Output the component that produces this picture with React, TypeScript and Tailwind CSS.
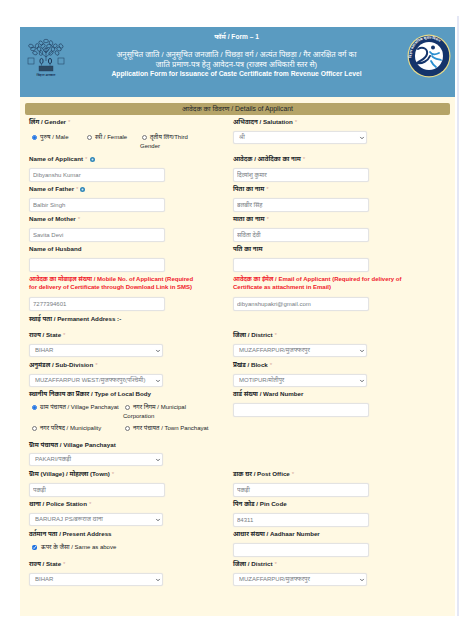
import React from 'react';
import { ChevronDown } from 'lucide-react';

const Star = () => <span className="text-[#d9a9a0] ml-[2px] font-normal">*</span>;

const Info = () => (
  <svg width="5" height="5" viewBox="0 0 12 12" className="inline-block ml-[2px] align-[-1px]">
    <circle cx="6" cy="6" r="6" fill="#2f86b8" />
    <circle cx="6" cy="6" r="2.4" fill="#cfe6f2" />
  </svg>
);

const Label: React.FC<{ text: string; req?: boolean; info?: boolean }> = ({ text, req, info }) => (
  <div className="h-[11px] mb-[4px] leading-[11px] text-[6.2px] font-bold text-[#212529] whitespace-nowrap">
    {text}
    {req && <Star />}
    {info && <Info />}
  </div>
);

const TextBox: React.FC<{ value?: string }> = ({ value = '' }) => (
  <input
    readOnly
    value={value}
    className="block w-[136px] h-[14px] bg-white border border-[#e3e3e3] rounded-[2px] px-[3px] text-[6px] text-[#777d83] shadow-[0_0_1px_#ddd] outline-none"
  />
);

const SelectBox: React.FC<{ value: string }> = ({ value }) => (
  <div className="relative w-[134px] h-[13px]">
    <select
      defaultValue={value}
      className="appearance-none block w-full h-full bg-white border border-[#e3e3e3] rounded-[2px] pl-[5px] text-[6px] text-[#777d83] shadow-[0_0_1px_#ddd] outline-none"
    >
      <option>{value}</option>
    </select>
    <ChevronDown size={6} strokeWidth={3} className="absolute right-[2px] top-[4px] text-[#343a40]" />
  </div>
);

const Radio: React.FC<{ checked?: boolean; name: string }> = ({ checked, name }) => (
  <input
    type="radio"
    name={name}
    defaultChecked={checked}
    className="w-[5px] h-[5px] m-0 ml-[2px] mr-[3px] inline-block accent-[#1a6fe0] align-[-0.5px]"
  />
);

const Field: React.FC<{ label: string; req?: boolean; info?: boolean; value?: string; select?: boolean }> = ({
  label,
  req,
  info,
  value,
  select,
}) => (
  <div className="h-[30px]">
    <Label text={label} req={req} info={info} />
    {select ? <SelectBox value={value || ''} /> : <TextBox value={value} />}
  </div>
);

const Row: React.FC<{ children: React.ReactNode; className?: string }> = ({ children, className = '' }) => (
  <div className={`grid grid-cols-[204px_1fr] ${className}`}>{children}</div>
);

const Emblem = () => (
  <svg width="42" height="42" viewBox="0 0 42 42" fill="none" stroke="#1e3a5a" strokeWidth="0.6">
    <path d="M21 26V12M21 22l-6-5M21 22l6-5M21 18l-4-5M21 18l4-5" />
    {[
      [21, 6], [16, 8], [26, 8], [12, 11], [30, 11], [8, 14], [34, 14], [14, 14], [28, 14],
      [18, 11], [24, 11], [10, 18], [32, 18], [16, 18], [26, 18], [21, 15], [6, 11], [36, 11],
    ].map(([x, y], i) => (
      <ellipse key={i} cx={x} cy={y} rx="2.4" ry="1.7" transform={`rotate(${i * 35} ${x} ${y})`} />
    ))}
    <ellipse cx="16.5" cy="26" rx="1.6" ry="2.6" strokeWidth="1" />
    <ellipse cx="25" cy="26" rx="1.6" ry="2.6" strokeWidth="1" />
    <path d="M16.5 29v1.5M25 29v1.5" />
    <rect x="3" y="23" width="6" height="6" strokeWidth="0.5" />
    <rect x="33" y="23" width="6" height="6" strokeWidth="0.5" />
    <rect x="14" y="31" width="14" height="5" fill="#2d4a63" strokeWidth="0.4" />
    <text x="21" y="41" fontSize="3.6" fill="#1e3a5a" stroke="none" textAnchor="middle" fontWeight="700">
      बिहार सरकार
    </text>
  </svg>
);

const MissionLogo = () => (
  <svg width="44" height="44" viewBox="0 0 44 44">
    <circle cx="22" cy="22" r="21.5" fill="#e4d98a" />
    <circle cx="22" cy="22" r="20.3" fill="#14346b" />
    <circle cx="22" cy="22" r="14" fill="#fff" />
    <defs>
      <path id="ring" d="M4.8 26A17.6 17.6 0 1 1 39.2 26" />
    </defs>
    <text fontSize="3.4" fill="#fff" fontWeight="700">
      <textPath href="#ring" startOffset="4%">बिहार प्रशासनिक सुधार मिशन</textPath>
    </text>
    <path d="M11 15c5-3 10 0 9 5s-6 6-10 9c5 1 11-2 13-7" fill="none" stroke="#14346b" strokeWidth="2" strokeLinecap="round" />
    <circle cx="26" cy="13.5" r="2" fill="#14346b" />
    <path d="M23 18c2 3 5 3 9 1M25 22c2 3 5 3 9 4M24 27c1 2 2 4 5 6" fill="none" stroke="#2a8fd0" strokeWidth="1.8" strokeLinecap="round" />
  </svg>
);

export default function App() {
  return (
    <div className="w-[474px] h-[632px] bg-white pt-[16px] pl-[20px] font-['Liberation_Sans','Noto_Sans',sans-serif]">
      <div className="w-[439px] h-[600px] pt-[11px] border-r-2 border-[#e4e7f5]">
        <div className="w-[435px] h-[70px] bg-[#5a9bc1] flex text-white">
          <div className="w-[48px] pl-[5px] pt-[8px]">
            <Emblem />
          </div>
          <div className="flex-1 text-center">
            <div className="mt-[5px] text-[6.6px] leading-[9px] font-bold">फॉर्म / Form – 1</div>
            <div className="mt-[9px] text-[7.7px] leading-[9.5px]">
              अनुसूचित जाति / अनुसूचित जनजाति / पिछड़ा वर्ग / अत्यंत पिछड़ा / गैर आरक्षित वर्ग का
            </div>
            <div className="text-[7.7px] leading-[9.5px]">जाति प्रमाण-पत्र हेतु आवेदन-पत्र (राजस्व अधिकारी स्तर से)</div>
            <div className="text-[6.75px] leading-[9px] font-bold">
              Application Form for Issuance of Caste Certificate from Revenue Officer Level
            </div>
          </div>
          <div className="w-[50px] pt-[7px] pl-[2px]">
            <MissionLogo />
          </div>
        </div>

        <div className="w-[435px] h-[519px] bg-[#fff9e3] pt-[6px]">
          <div className="mx-[5px] h-[12px] rounded-[2px] bg-[#b5a468] text-center text-[6.8px] leading-[12px] text-[#212529]">
            आवेदक का विवरण / Details of Applicant
          </div>

          <div className="pl-[9px]">
            <Row className="h-[38px] pt-[1px]">
              <div>
                <Label text="लिंग / Gender" req />
                <div className="flex text-[6px] leading-[9px] text-[#212529] pl-[1px] pt-[2px]">
                  <label className="w-[55px] whitespace-nowrap"><Radio name="g" checked />पुरुष / Male</label>
                  <label className="w-[55px] whitespace-nowrap"><Radio name="g" />स्त्री / Female</label>
                  <label className="w-[60px]"><Radio name="g" />तृतीय लिंग/Third Gender</label>
                </div>
              </div>
              <div>
                <Label text="अभिवादन / Salutation" req />
                <SelectBox value="श्री" />
              </div>
            </Row>

            <Row>
              <Field label="Name of Applicant" req info value="Dibyanshu Kumar" />
              <Field label="आवेदक / आवेदिका का नाम" req value="दिव्यांशु कुमार" />
            </Row>
            <Row>
              <Field label="Name of Father" req info value="Balbir Singh" />
              <Field label="पिता का नाम" req value="बलबीर सिंह" />
            </Row>
            <Row>
              <Field label="Name of Mother" req value="Savita Devi" />
              <Field label="माता का नाम" req value="सविता देवी" />
            </Row>
            <Row>
              <Field label="Name of Husband" />
              <Field label="पति का नाम" />
            </Row>

            <Row className="h-[39px]">
              <div>
                <div className="w-[170px] h-[20px] mb-[4px] text-[6px] leading-[8.3px] pt-[2px] font-bold text-[#f0202a]">
                  आवेदक का मोबाइल संख्या / Mobile No. of Applicant (Required for delivery of Certificate through Download Link in SMS)
                </div>
                <TextBox value="7277394601" />
              </div>
              <div>
                <div className="w-[175px] h-[20px] mb-[4px] text-[6px] leading-[8.3px] pt-[2px] font-bold text-[#f0202a]">
                  आवेदक का ईमेल / Email of Applicant (Required for delivery of Certificate as attachment in Email)
                </div>
                <TextBox value="dibyanshupakri@gmail.com" />
              </div>
            </Row>

            <div className="h-[17px] pt-[1px] text-[6.2px] leading-[11px] font-bold text-[#212529]">स्थाई पता / Permanent Address :-</div>

            <Row>
              <Field label="राज्य / State" req select value="BIHAR" />
              <Field label="जिला / District" req select value="MUZAFFARPUR/मुजफ्फरपुर" />
            </Row>
            <Row className="h-[29px]">
              <Field label="अनुमंडल / Sub-Division" req select value="MUZAFFARPUR WEST/मुजफ्फरपुर(पश्चिमी)" />
              <Field label="प्रखंड / Block" req select value="MOTIPUR/मोतीपुर" />
            </Row>

            <Row className="h-[51px]">
              <div>
                <Label text="स्थानीय निकाय का प्रकार / Type of Local Body" />
                <div className="grid grid-cols-[93px_88px] text-[6px] leading-[9px] text-[#212529] pl-[1px]">
                  <label className="whitespace-nowrap h-[21px]"><Radio name="l" checked />ग्राम पंचायत / Village Panchayat</label>
                  <label className="h-[21px]"><Radio name="l" />नगर निगम / Municipal Corporation</label>
                  <label className="whitespace-nowrap"><Radio name="l" />नगर परिषद / Municipality</label>
                  <label className="whitespace-nowrap"><Radio name="l" />नगर पंचायत / Town Panchayat</label>
                </div>
              </div>
              <Field label="वार्ड संख्या / Ward Number" />
            </Row>

            <div className="h-[29px]">
              <div className="h-[11px] mb-[3px] leading-[11px] text-[6.2px] font-bold text-[#212529]">ग्राम पंचायत / Village Panchayat</div>
              <SelectBox value="PAKARI/पकड़ी" />
            </div>

            <Row>
              <Field label="ग्राम (Village) / मोहल्ला (Town)" req value="पकड़ी" />
              <Field label="डाक घर / Post Office" req value="पकड़ी" />
            </Row>
            <Row>
              <Field label="थाना / Police Station" req select value="BARURAJ PS/बरूराज थाना" />
              <Field label="पिन कोड / Pin Code" value="84311" />
            </Row>
            <Row>
              <div>
                <Label text="वर्तमान पता / Present Address" />
                <label className="block pl-[1px] text-[6px] leading-[9px] text-[#212529]">
                  <input type="checkbox" defaultChecked className="w-[5px] h-[5px] m-0 ml-[2px] mr-[4px] inline-block accent-[#1a6fe0] align-[-0.5px]" />
                  ऊपर के जैसा / Same as above
                </label>
              </div>
              <Field label="आधार संख्या / Aadhaar Number" />
            </Row>
            <Row>
              <Field label="राज्य / State" req select value="BIHAR" />
              <Field label="जिला / District" req select value="MUZAFFARPUR/मुजफ्फरपुर" />
            </Row>
          </div>
        </div>
      </div>
    </div>
  );
}
